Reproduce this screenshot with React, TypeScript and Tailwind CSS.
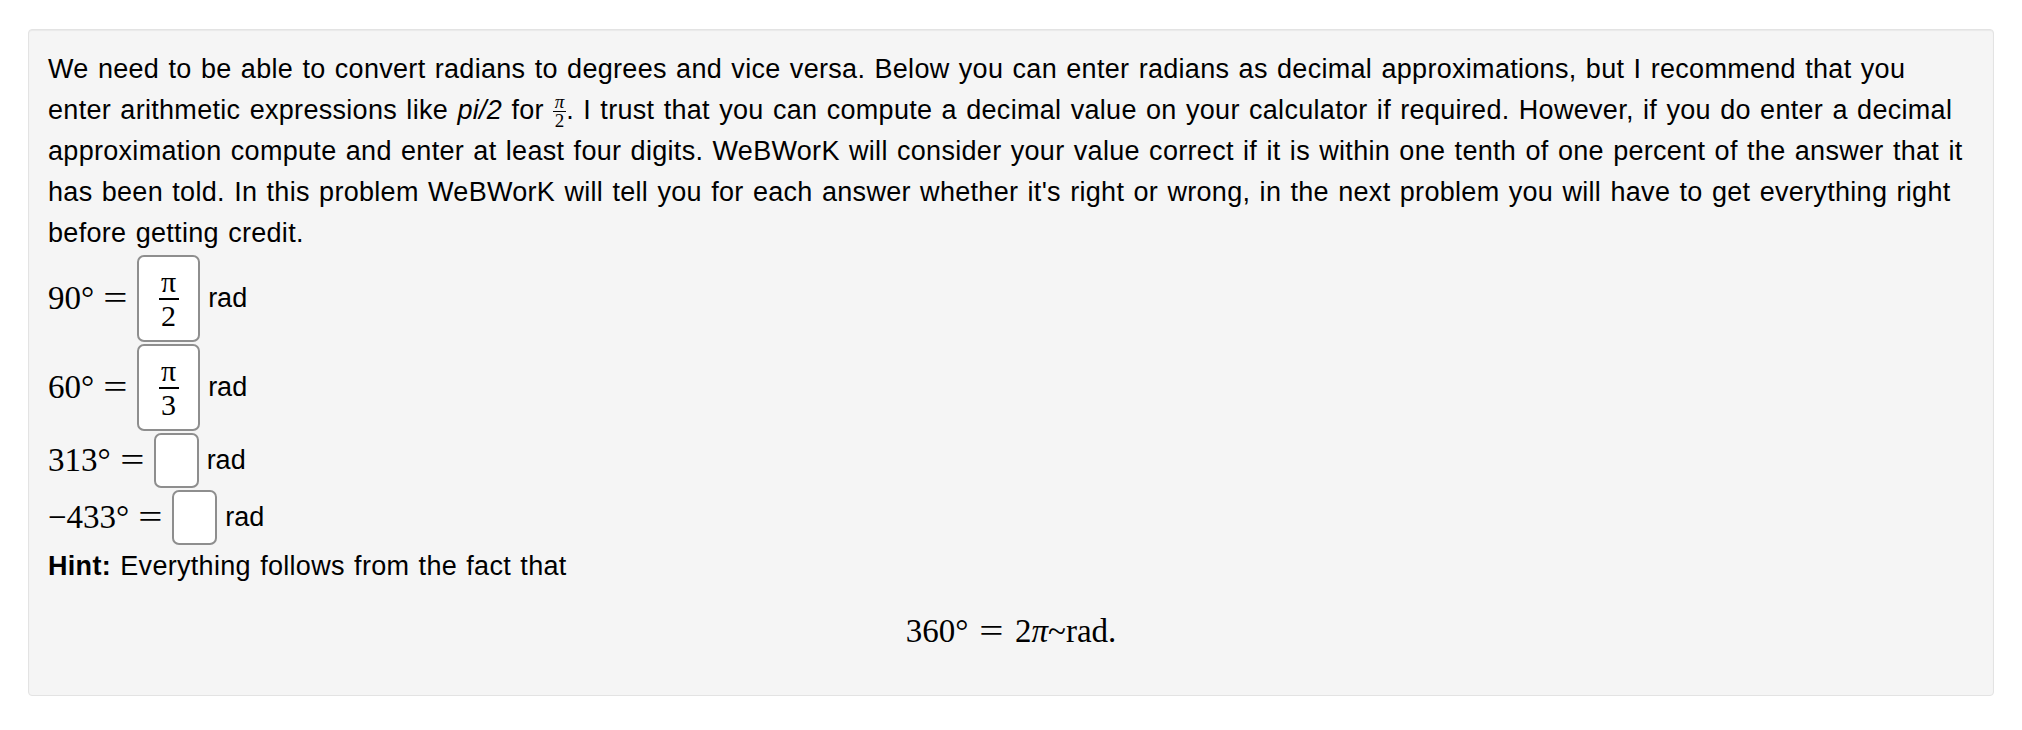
const serif = "font-['Liberation_Serif','Times_New_Roman',serif]";

const FilledBox = ({ denom }: { denom: string }) => (
  <span className="inline-flex h-[87px] w-[63px] flex-col items-center justify-center rounded-[7px] border-2 border-[#8e8e8e] bg-white">
    <span className={`${serif} text-[30px] leading-[26px]`}>π</span>
    <span className="my-[3px] h-[2px] w-[20px] bg-black"></span>
    <span className={`${serif} text-[30px] leading-[26px]`}>{denom}</span>
  </span>
);

const EmptyBox = () => (
  <span className="inline-block h-[55px] w-[45px] rounded-[7px] border-2 border-[#8e8e8e] bg-white"></span>
);

const Eq = () => (
  <span className={`${serif} mx-[12px] inline-block scale-x-[1.3] text-[33px] leading-none`}>=</span>
);

const Row = ({ label, filled, className }: { label: string; filled?: string; className: string }) => (
  <div className={`flex items-center ${className}`}>
    <span className={`${serif} text-[33px] leading-none tracking-normal`}>{label}</span>
    <Eq />
    {filled ? <FilledBox denom={filled} /> : <EmptyBox />}
    <span className="ml-[8px] tracking-normal">rad</span>
  </div>
);

export default function App() {
  return (
    <div className="min-h-[730px] bg-white pt-[29px] text-black">
      <div className="mx-[28px] rounded-[4px] border border-[#e3e3e3] bg-[#f5f5f5] p-[19px] font-['Liberation_Sans',Arial,sans-serif] text-[27px] leading-[41px] tracking-[0.3px] [word-spacing:1.5px] shadow-[inset_0_1px_1px_rgba(0,0,0,0.05)]">
        <p>
          We need to be able to convert radians to degrees and vice versa. Below you can enter radians as decimal
          approximations, but I recommend that you enter arithmetic expressions like <i>pi/2</i> for{" "}
          <span className={`${serif} inline-flex flex-col items-center align-middle text-[19px] leading-[16px]`}>
            <i>π</i>
            <span className="my-[1px] h-[1px] w-[13px] bg-black"></span>
            <span>2</span>
          </span>
          . I trust that you can compute a decimal value on your calculator if required. However, if you do enter a
          decimal approximation compute and enter at least four digits. WeBWorK will consider your value correct if it
          is within one tenth of one percent of the answer that it has been told. In this problem WeBWorK will tell you
          for each answer whether it's right or wrong, in the next problem you will have to get everything right
          before getting credit.
        </p>
        <Row label="90°" filled="2" className="h-[89px]" />
        <Row label="60°" filled="3" className="h-[89px]" />
        <Row label="313°" className="h-[57px]" />
        <Row label="−433°" className="h-[57px]" />
        <p>
          <b>Hint:</b> Everything follows from the fact that
        </p>
        <div className={`${serif} flex h-[89px] items-center justify-center text-[33px] tracking-normal [word-spacing:0px]`}>
          <span>
            360°
            <span className="mx-[14px] inline-block scale-x-[1.3]">=</span>2<i>π</i>~rad.
          </span>
        </div>
      </div>
    </div>
  );
}
